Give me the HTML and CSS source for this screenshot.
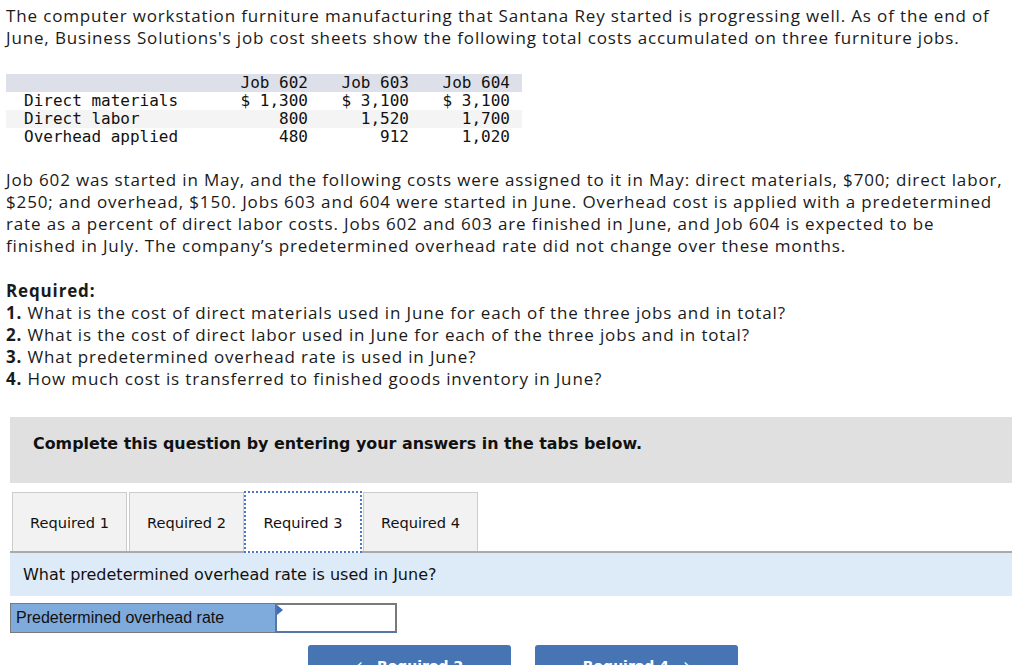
FILE: index.html
```html
<!DOCTYPE html>
<html>
<head>
<meta charset="utf-8">
<link rel="stylesheet" href="styles.css">
</head>
<body>
<p class="para">The computer workstation furniture manufacturing that Santana Rey started is progressing well. As of the end of June, Business Solutions's job cost sheets show the following total costs accumulated on three furniture jobs.</p>

<table class="jobs">
  <tr class="head"><td class="lbl"></td><td>Job 602</td><td>Job 603</td><td>Job 604</td></tr>
  <tr><td class="lbl">Direct materials</td><td>$ 1,300</td><td>$ 3,100</td><td>$ 3,100</td></tr>
  <tr class="alt"><td class="lbl">Direct labor</td><td>800</td><td>1,520</td><td>1,700</td></tr>
  <tr><td class="lbl">Overhead applied</td><td>480</td><td>912</td><td>1,020</td></tr>
</table>

<p class="para p2">Job 602 was started in May, and the following costs were assigned to it in May: direct materials, $700; direct labor, $250; and overhead, $150. Jobs 603 and 604 were started in June. Overhead cost is applied with a predetermined rate as a percent of direct labor costs. Jobs 602 and 603 are finished in June, and Job 604 is expected to be finished in July. The company’s predetermined overhead rate did not change over these months.</p>

<div class="para req">
  <div><b>Required:</b></div>
  <div><b>1.</b> What is the cost of direct materials used in June for each of the three jobs and in total?</div>
  <div><b>2.</b> What is the cost of direct labor used in June for each of the three jobs and in total?</div>
  <div><b>3.</b> What predetermined overhead rate is used in June?</div>
  <div><b>4.</b> How much cost is transferred to finished goods inventory in June?</div>
</div>

<div class="complete">Complete this question by entering your answers in the tabs below.</div>

<div class="tabs">
  <div class="tab">Required 1</div>
  <div class="tab">Required 2</div>
  <div class="tab active">Required 3</div>
  <div class="tab">Required 4</div>
</div>

<div class="question">What predetermined overhead rate is used in June?</div>

<div class="answer">
  <div class="alabel">Predetermined overhead rate</div>
  <div class="ainput"><span class="tri"></span></div>
</div>

<div class="nav">
  <div class="btn"><span class="chev">&lsaquo;</span>Required 2</div>
  <div class="btn">Required 4<span class="chev r">&rsaquo;</span></div>
</div>
</body>
</html>
```

FILE: styles.css
```css
html, body {
  margin: 0;
  padding: 0;
  background: #fff;
  overflow: hidden;
}
body {
  padding: 5px 12px 0 6px;
  color: #1a1a1a;
  font-family: "Open Sans", "Liberation Sans", Arial, sans-serif;
}
.para {
  font-size: 17px;
  line-height: 22px;
  letter-spacing: 0.85px;
  margin: 0;
  max-width: 998px;
}
.para b {
  font-weight: 700;
}
.jobs {
  margin-top: 25px;
  border-collapse: collapse;
  font-family: "DejaVu Sans Mono", monospace;
  font-size: 16px;
  color: #111;
  width: 516px;
}
.jobs td {
  height: 18px;
  padding: 0 12px 0 0;
  line-height: 18px;
  text-align: right;
  width: 89px;
}
.jobs td.lbl {
  text-align: left;
  padding-left: 18px;
  width: auto;
}
.jobs tr.head td { background: #dde0e8; }
.jobs tr.alt td { background: #f4f4f4; }
.p2 {
  margin-top: 23px;
}
.req {
  margin-top: 23px;
}
.complete {
  margin: 27px 0 0 4px;
  background: #e0e0e0;
  height: 66px;
  box-sizing: border-box;
  padding: 17px 0 0 23px;
  font-family: "DejaVu Sans", Verdana, sans-serif;
  font-weight: bold;
  font-size: 15.9px;
  color: #111;
}
.tabs {
  display: flex;
  gap: 2px;
  margin: 8px 0 0 6px;
  align-items: flex-end;
}
.tab {
  width: 115px;
  height: 59px;
  box-sizing: border-box;
  border: 1px solid #ccc;
  border-bottom: none;
  background: #f2f2f2;
  font-family: "DejaVu Sans", Verdana, sans-serif;
  font-size: 14.6px;
  color: #111;
  display: flex;
  align-items: center;
  justify-content: center;
}
.tab.active {
  background: #fff;
  width: 118px;
  height: 62px;
  border: 2px dotted #4a78c2;
  margin: 0 -1px -2px -2px;
  position: relative;
  z-index: 1;
}
.question {
  margin-left: 4px;
  background: #ddebf8;
  border-top: 2px solid #aaa;
  height: 45px;
  box-sizing: border-box;
  padding: 12px 0 0 13px;
  font-family: "DejaVu Sans", Verdana, sans-serif;
  font-size: 16px;
  color: #111;
}
.answer {
  display: flex;
  margin: 7px 0 0 4px;
  height: 30px;
}
.alabel {
  width: 265px;
  box-sizing: border-box;
  background: #7faadc;
  border: 1px solid #7a7a7a;
  border-right: none;
  font-family: "Liberation Sans", Arial, sans-serif;
  font-size: 16px;
  padding: 5px 0 0 5px;
  color: #111;
}
.ainput {
  width: 122px;
  box-sizing: border-box;
  background: #fff;
  border: 2px solid #5576a8;
  border-top-color: #7a7a7a;
  border-right-color: #7a7a7a;
  position: relative;
}
.tri {
  position: absolute;
  left: 0;
  top: 0;
  width: 0;
  height: 0;
  border-top: 5px solid transparent;
  border-bottom: 5px solid transparent;
  border-left: 6px solid #3a6ec0;
}
.nav {
  display: flex;
  gap: 24px;
  margin: 12px 0 0 302px;
}
.btn {
  width: 203px;
  height: 40px;
  background: #4774b3;
  border-radius: 3px 3px 0 0;
  color: #fff;
  font-family: "DejaVu Sans", Verdana, sans-serif;
  font-weight: bold;
  font-size: 14px;
  line-height: 16px;
  text-align: center;
  padding-top: 12px;
  box-sizing: border-box;
}
.chev {
  font-weight: normal;
  font-size: 18px;
  line-height: 16px;
  margin-right: 14px;
}
.chev.r {
  margin: 0 0 0 14px;
}
```
